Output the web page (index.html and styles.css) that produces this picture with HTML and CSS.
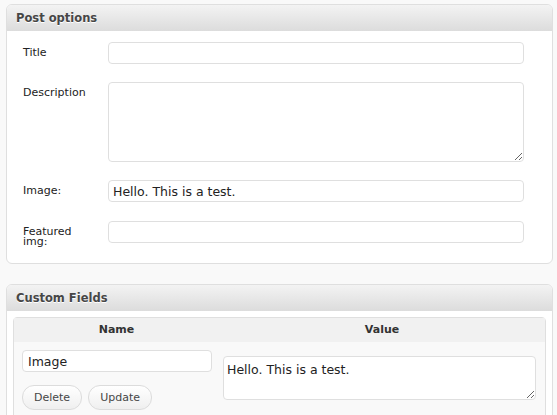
FILE: index.html
```html
<!DOCTYPE html>
<html>
<head>
<meta charset="utf-8">
<link rel="stylesheet" href="styles.css">
</head>
<body>
<div class="box">
  <h3 class="box-head">Post options</h3>
  <div class="box-body form">
    <div class="row"><label class="lbl">Title</label><input class="field" type="text"></div>
    <div class="row"><label class="lbl">Description</label><textarea class="field area"></textarea></div>
    <div class="row"><label class="lbl">Image:</label><input class="field" type="text" value="Hello. This is a test."></div>
    <div class="row row-last"><label class="lbl">Featured img:</label><input class="field" type="text"></div>
  </div>
</div>
<div class="box box2">
  <h3 class="box-head">Custom Fields</h3>
  <div class="box-body cf">
    <div class="meta-table">
      <div class="meta-head"><div class="th">Name</div><div class="th">Value</div></div>
      <div class="meta-row">
        <div class="cell name-cell">
          <input class="field name-field" type="text" value="Image">
          <div class="btns"><button class="btn">Delete</button><button class="btn">Update</button></div>
        </div>
        <div class="cell value-cell"><textarea class="field value-area">Hello. This is a test.</textarea></div>
      </div>
    </div>
  </div>
</div>
</body>
</html>
```
FILE: styles.css
```css
html, body {
  margin: 0;
  padding: 0;
  background: #f9f9f9;
}
body {
  font-family: "DejaVu Sans", Verdana, sans-serif;
  font-size: 11px;
  color: #333;
  padding-top: 4px;
}
.box {
  width: 547px;
  box-sizing: border-box;
  margin-left: 6px;
  border: 1px solid #dfdfdf;
  border-radius: 6px;
  background: #fff;
  overflow: hidden;
}
.box2 {
  margin-top: 20px;
  height: 200px;
}
.box-head {
  margin: 0;
  height: 26px;
  line-height: 26px;
  padding: 0 0 0 9px;
  font-size: 11.5px;
  font-weight: bold;
  color: #464646;
  text-shadow: 0 1px 0 #fff;
  background: linear-gradient(to bottom, #f3f3f3, #dcdcdc);
}
.form {
  padding: 11px 0 20px 16px;
  display: flex;
  flex-direction: column;
  gap: 18px;
}
.row {
  display: grid;
  grid-template-columns: 85px 416px;
  align-items: start;
}
.row-last {
  margin-top: 1px;
}
.lbl {
  width: 70px;
  height: 16px;
  padding-top: 6px;
  line-height: 10px;
  font-size: 11px;
  color: #222;
}
.field {
  box-sizing: border-box;
  width: 100%;
  height: 22px;
  margin: 0;
  border: 1px solid #dfdfdf;
  border-radius: 4px;
  background: #fff;
  font-family: "DejaVu Sans", Verdana, sans-serif;
  font-size: 12.5px;
  color: #222;
  padding: 0 4px;
  outline: none;
}
.area {
  height: 80px;
  resize: vertical;
}
.cf {
  padding: 6px 6px;
}
.meta-table {
  border: 1px solid #dfdfdf;
  border-radius: 4px 4px 0 0;
  background: #f9f9f9;
  height: 120px;
}
.meta-head {
  display: grid;
  grid-template-columns: 205px 326px;
  background: #f1f1f1;
  height: 24px;
}
.th {
  text-align: center;
  line-height: 24px;
  font-weight: bold;
  color: #333;
}
.meta-row {
  display: grid;
  grid-template-columns: 205px 326px;
}
.name-cell {
  padding: 8px 7px 0 8px;
}
.name-field {
  width: 190px;
  padding: 0 5px;
}
.btns {
  display: flex;
  gap: 6px;
  margin-top: 13px;
}
.btn {
  box-sizing: border-box;
  height: 25px;
  padding: 0 11px;
  border: 1px solid #dcdcdc;
  border-radius: 12px;
  background: linear-gradient(to bottom, #ffffff, #efefef);
  font-family: "DejaVu Sans", Verdana, sans-serif;
  font-size: 11px;
  line-height: 23px;
  color: #464646;
}
.value-cell {
  padding: 14px 9px 0 4px;
}
.value-area {
  width: 313px;
  height: 44px;
  padding: 5px 3px;
  line-height: 16px;
  resize: vertical;
}
```
